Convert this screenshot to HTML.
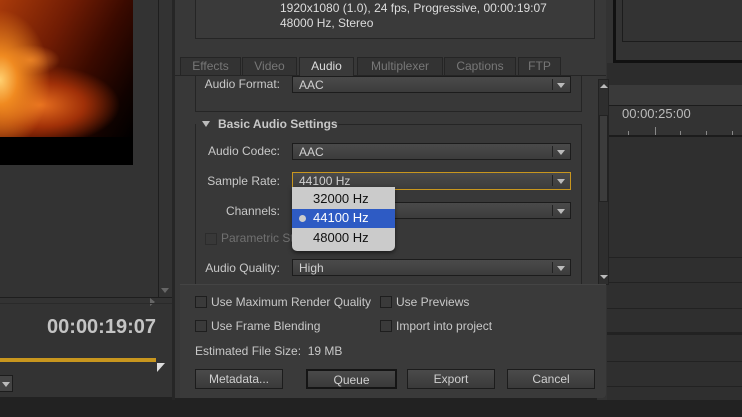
<!DOCTYPE html>
<html><head><meta charset="utf-8"><style>
*{margin:0;padding:0;box-sizing:border-box}
body{width:742px;height:417px;overflow:hidden;background:#2a2a2a;font-family:"Liberation Sans",sans-serif;font-size:12px;color:#c8c8c8;position:relative}
.a{position:absolute}
.dd{position:absolute;left:292px;width:279px;height:17px;border:1px solid #1c1c1c;background:linear-gradient(#4a4a4a,#3c3c3c);color:#d0d0d0;font-size:12px;padding:1px 6px;line-height:14px}
.dd:after{content:"";position:absolute;right:5px;top:6px;border-left:4px solid transparent;border-right:4px solid transparent;border-top:5px solid #bbb}
.dd:before{content:"";position:absolute;right:17px;top:2px;width:1px;height:11px;background:#222}
.lbl{position:absolute;font-size:12px;color:#c8c8c8;text-align:right;width:100px}
.cb{position:absolute;width:12px;height:12px;border:1px solid #1e1e1e;background:#3a3a3a}
.btn{position:absolute;top:369px;height:20px;border:1px solid #1c1c1c;background:linear-gradient(#4a4a4a,#3a3a3a);text-align:center;line-height:18px;color:#cfcfcf;font-size:12px}
.tab{position:absolute;top:57px;height:18px;background:#333;border:1px solid #252525;border-bottom:none;text-align:center;line-height:17px;color:#777;font-size:12px}
</style></head><body>
<div class="a" style="left:0;top:0;width:172px;height:400px;background:#333"></div>
<div class="a" style="left:0;top:0;width:133px;height:165px;background:#000"></div>
<div class="a" style="left:0;top:0;width:133px;height:137px;background:radial-gradient(ellipse 50px 70px at 0px 80px,#ffd070 0%,#f08a20 35%,rgba(184,58,8,0) 100%),radial-gradient(ellipse 80px 40px at 40px 105px,#e87020 0%,#a03008 55%,rgba(0,0,0,0) 100%),radial-gradient(ellipse 30px 15px at 30px 60px,#e07828 0%,rgba(0,0,0,0) 100%),linear-gradient(120deg,#a83a0a 0%,#701c04 35%,#3a0a00 60%,#100200 85%,#000 100%)"></div>
<div class="a" style="left:158px;top:0;width:1px;height:297px;background:#1e1e1e"></div>
<div class="a" style="left:0;top:297px;width:172px;height:1px;background:#1e1e1e"></div>
<div class="a" style="left:161px;top:288px;border-left:4px solid transparent;border-right:4px solid transparent;border-top:5px solid #666"></div>
<div class="a" style="left:150px;top:298px;border-top:4px solid transparent;border-bottom:4px solid transparent;border-left:5px solid #666"></div>
<div class="a" style="left:0;top:303px;width:172px;height:1px;background:#2a2a2a"></div>
<div class="a" style="left:0;top:316px;width:156px;text-align:right;font-size:20px;font-weight:bold;color:#c4c4c4">00:00:19:07</div>
<div class="a" style="left:0;top:358px;width:156px;height:4px;background:#c8961e"></div>
<div class="a" style="left:157px;top:363px;border-top:9px solid #ddd;border-right:8px solid transparent;width:0"></div>
<div class="a" style="left:-2px;top:375px;width:15px;height:17px;border:1px solid #1c1c1c;background:#444"></div>
<div class="a" style="left:2px;top:382px;border-left:4px solid transparent;border-right:4px solid transparent;border-top:5px solid #bbb"></div>
<div class="a" style="left:0;top:397px;width:742px;height:20px;background:#222"></div>

<div class="a" style="left:597px;top:0;width:145px;height:400px;background:#333"></div>
<div class="a" style="left:613px;top:0;width:3px;height:63px;background:#111"></div>
<div class="a" style="left:616px;top:0;width:126px;height:62px;background:#333"></div>
<div class="a" style="left:622px;top:0;width:120px;height:42px;border:1px solid #1c1c1c;border-right:none;border-top:none"></div>
<div class="a" style="left:613px;top:60px;width:129px;height:3px;background:#111"></div>
<div class="a" style="left:607px;top:63px;width:135px;height:22px;background:#2c2c2c"></div>
<div class="a" style="left:607px;top:85px;width:135px;height:21px;background:#3a3a3a;border-bottom:1px solid #1c1c1c"></div>
<div class="a" style="left:622px;top:106px;font-size:13px;color:#bbb">00:00:25:00</div>
<div class="a" style="left:628px;top:131px;width:1px;height:4px;background:#888"></div>
<div class="a" style="left:655px;top:127px;width:1px;height:8px;background:#888"></div>
<div class="a" style="left:680px;top:131px;width:1px;height:4px;background:#888"></div>
<div class="a" style="left:706px;top:131px;width:1px;height:4px;background:#888"></div>
<div class="a" style="left:732px;top:131px;width:1px;height:4px;background:#888"></div>
<div class="a" style="left:607px;top:135px;width:135px;height:2px;background:#1c1c1c"></div>
<div class="a" style="left:607px;top:137px;width:135px;height:263px;background:#2f2f2f"></div>
<div class="a" style="left:607px;top:257px;width:135px;height:1px;background:#222"></div>
<div class="a" style="left:607px;top:282px;width:135px;height:1px;background:#222"></div>
<div class="a" style="left:607px;top:308px;width:135px;height:1px;background:#222"></div>
<div class="a" style="left:607px;top:332px;width:135px;height:3px;background:#222"></div>
<div class="a" style="left:607px;top:361px;width:135px;height:1px;background:#222"></div>
<div class="a" style="left:607px;top:386px;width:135px;height:1px;background:#222"></div>

<div class="a" style="left:172px;top:0;width:3px;height:400px;background:#262626"></div>
<div class="a" style="left:175px;top:0;width:431px;height:398px;background:#383838;border-radius:0 0 4px 0"></div>
<div class="a" style="left:195px;top:0;width:400px;height:39px;border:1px solid #252525;border-top:none;background:#3a3a3a"></div>
<div class="a" style="left:280px;top:1px;font-size:12px;color:#ddd;line-height:15px">1920x1080 (1.0), 24 fps, Progressive, 00:00:19:07<br>48000 Hz, Stereo</div>

<div class="tab" style="left:180px;width:61px">Effects</div>
<div class="tab" style="left:242px;width:55px">Video</div>
<div class="tab" style="left:299px;width:55px;background:#3a3a3a;color:#ddd;height:19px">Audio</div>
<div class="tab" style="left:357px;width:86px">Multiplexer</div>
<div class="tab" style="left:444px;width:72px">Captions</div>
<div class="tab" style="left:518px;width:43px">FTP</div>
<div class="a" style="left:175px;top:75px;width:124px;height:1px;background:#252525"></div>
<div class="a" style="left:354px;top:75px;width:252px;height:1px;background:#252525"></div>

<div class="a" style="left:195px;top:76px;width:387px;height:36px;border:1px solid #252525;border-top:none"></div>
<div class="lbl" style="left:180px;top:77px">Audio Format:</div>
<div class="dd" style="top:76px">AAC</div>

<div class="a" style="left:195px;top:124px;width:387px;height:161px;border-left:1px solid #252525;border-right:1px solid #252525"></div>
<div class="a" style="left:338px;top:124px;width:244px;height:1px;background:#252525"></div>
<div class="a" style="left:202px;top:121px;border-left:4px solid transparent;border-right:4px solid transparent;border-top:6px solid #bbb"></div>
<div class="a" style="left:218px;top:117px;font-weight:bold;color:#c8c8c8">Basic Audio Settings</div>

<div class="lbl" style="left:180px;top:144px">Audio Codec:</div>
<div class="dd" style="top:143px">AAC</div>
<div class="lbl" style="left:180px;top:174px">Sample Rate:</div>
<div class="dd" style="top:172px;border-color:#c8961e;height:18px">44100 Hz</div>
<div class="lbl" style="left:180px;top:204px">Channels:</div>
<div class="dd" style="top:202px"></div>
<div class="cb" style="left:205px;top:233px;border-color:#2c2c2c;background:#383838"></div>
<div class="a" style="left:221px;top:231px;color:#707070">Parametric St</div>
<div class="lbl" style="left:180px;top:261px">Audio Quality:</div>
<div class="dd" style="top:259px">High</div>

<div class="a" style="left:292px;top:187px;width:103px;height:64px;background:#cbcbcb;border-radius:0 0 5px 5px;box-shadow:0 2px 4px rgba(0,0,0,.5)"></div>
<div class="a" style="left:292px;top:209px;width:103px;height:19px;background:#2e5bc4"></div>
<div class="a" style="left:313px;top:191px;font-size:13px;color:#111">32000 Hz</div>
<div class="a" style="left:313px;top:210px;font-size:13px;color:#fff">44100 Hz</div>
<div class="a" style="left:313px;top:230px;font-size:13px;color:#111">48000 Hz</div>
<div class="a" style="left:299px;top:215px;width:7px;height:7px;border-radius:50%;background:#ccc"></div>

<div class="a" style="left:598px;top:79px;width:11px;height:206px;background:#2e2e2e;border:1px solid #222"></div>
<div class="a" style="left:599px;top:115px;width:9px;height:87px;background:#3c3c3c;border:1px solid #222"></div>
<div class="a" style="left:600px;top:84px;border-left:4px solid transparent;border-right:4px solid transparent;border-bottom:4px solid #bbb"></div>
<div class="a" style="left:600px;top:275px;border-left:4px solid transparent;border-right:4px solid transparent;border-top:4px solid #bbb"></div>

<div class="a" style="left:180px;top:284px;width:426px;height:1px;background:#444"></div>
<div class="a" style="left:180px;top:285px;width:426px;height:113px;background:#3a3a3a;border-radius:0 0 4px 0"></div>
<div class="cb" style="left:195px;top:296px"></div>
<div class="a" style="left:211px;top:295px">Use Maximum Render Quality</div>
<div class="cb" style="left:380px;top:296px"></div>
<div class="a" style="left:396px;top:295px">Use Previews</div>
<div class="cb" style="left:195px;top:320px"></div>
<div class="a" style="left:211px;top:319px">Use Frame Blending</div>
<div class="cb" style="left:380px;top:320px"></div>
<div class="a" style="left:396px;top:319px">Import into project</div>
<div class="a" style="left:195px;top:344px">Estimated File Size:&nbsp; 19 MB</div>
<div class="btn" style="left:195px;width:88px">Metadata...</div>
<div class="btn" style="left:306px;width:91px;border:2px solid #151515">Queue</div>
<div class="btn" style="left:407px;width:88px">Export</div>
<div class="btn" style="left:507px;width:88px">Cancel</div>
</body></html>
